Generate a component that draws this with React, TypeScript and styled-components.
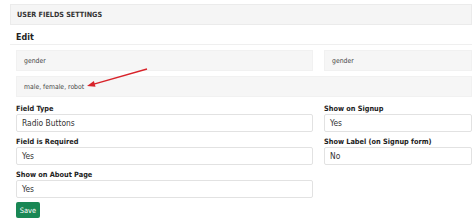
import React from 'react';
import styled, { createGlobalStyle } from 'styled-components';

const GlobalStyle = createGlobalStyle`
  html, body {
    margin: 0;
    padding: 0;
    background: #ffffff;
    font-family: "DejaVu Sans Condensed", "DejaVu Sans", sans-serif;
    color: #222;
  }
`;

const App = () => {
  return (
    <>
      <GlobalStyle />
      <Page>
        <PanelHeader>USER FIELDS SETTINGS</PanelHeader>
        <EditTitle>Edit</EditTitle>
        <Body>
          <Grid>
            <FilledInput>gender</FilledInput>
            <FilledInput>gender</FilledInput>
          </Grid>
          <OptionsRow>
            <FilledInput>male, female, robot</FilledInput>
            <Arrow width="64" height="24" viewBox="0 0 64 24">
              <line x1="61" y1="3" x2="7" y2="18.3" stroke="#d8232a" strokeWidth="1.3" />
              <polygon points="1,20 9.5,20.7 7.9,14.9" fill="#d8232a" />
            </Arrow>
          </OptionsRow>
          <Grid>
            <Field>
              <Label>Field Type</Label>
              <Select>Radio Buttons</Select>
            </Field>
            <Field>
              <Label>Show on Signup</Label>
              <Select>Yes</Select>
            </Field>
            <Field>
              <Label>Field is Required</Label>
              <Select>Yes</Select>
            </Field>
            <Field>
              <Label>Show Label (on Signup form)</Label>
              <Select>No</Select>
            </Field>
            <Field>
              <Label>Show on About Page</Label>
              <Select>Yes</Select>
            </Field>
          </Grid>
          <SaveButton>Save</SaveButton>
        </Body>
      </Page>
    </>
  );
};

export default App;

const Page = styled.div`
  width: 462px;
  padding: 4px 2px 0 10px;
`;

const PanelHeader = styled.div`
  display: flex;
  align-items: center;
  height: 19px;
  padding-left: 6px;
  background: #f5f5f5;
  border: 1px solid #ebebeb;
  font-size: 7.2px;
  font-weight: bold;
  color: #333;
`;

const EditTitle = styled.div`
  height: 20px;
  padding: 5px 0 0 6px;
  box-sizing: border-box;
  border-bottom: 1px solid #efefef;
  font-size: 8.9px;
  font-weight: bold;
  color: #222;
  line-height: 14px;
`;

const Body = styled.div`
  padding: 5px 0 0 6px;
`;

const Grid = styled.div`
  display: grid;
  grid-template-columns: 297px 1fr;
  column-gap: 11px;
`;

const OptionsRow = styled.div`
  position: relative;
  margin: 5px 0 6px;
`;

const FilledInput = styled.div`
  display: flex;
  align-items: center;
  height: 19px;
  padding-left: 7px;
  background: #f6f6f6;
  border: 1px solid #f1f1f1;
  font-size: 6.8px;
  color: #444;
`;

const Arrow = styled.svg`
  position: absolute;
  left: 70px;
  top: -10px;
`;

const Field = styled.div`
  display: flex;
  flex-direction: column;
  margin-bottom: 4px;
`;

const Label = styled.div`
  height: 11px;
  font-size: 7.3px;
  font-weight: bold;
  color: #222;
  line-height: 11px;
`;

const Select = styled.div`
  display: flex;
  align-items: center;
  height: 16px;
  padding-left: 5px;
  background: #fff;
  border: 1px solid #e2e2e2;
  border-radius: 2px;
  font-size: 8.4px;
  color: #333;
`;

const SaveButton = styled.button`
  display: block;
  height: 16px;
  width: 24px;
  padding: 0;
  background: #198754;
  border: none;
  border-radius: 2px;
  font-family: "DejaVu Sans Condensed", "DejaVu Sans", sans-serif;
  font-size: 7.4px;
  color: #fff;
`;
